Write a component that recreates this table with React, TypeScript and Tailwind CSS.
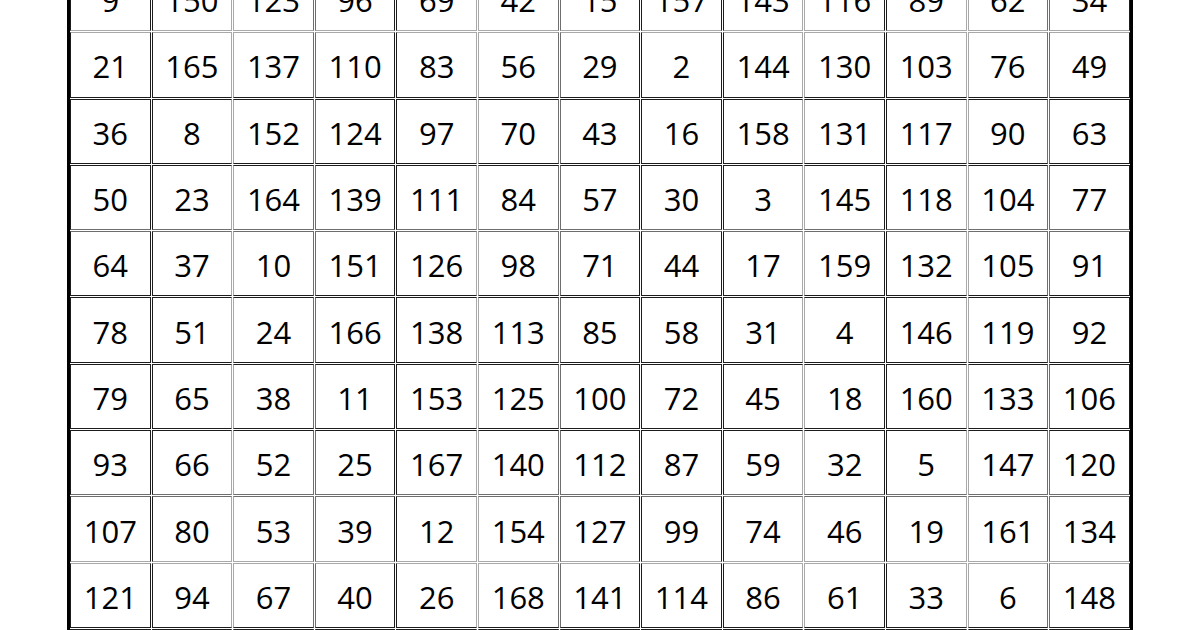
const rows: (number | null)[][] = [
  [9, 150, 123, 96, 69, 42, 15, 157, 143, 116, 89, 62, 34],
  [21, 165, 137, 110, 83, 56, 29, 2, 144, 130, 103, 76, 49],
  [36, 8, 152, 124, 97, 70, 43, 16, 158, 131, 117, 90, 63],
  [50, 23, 164, 139, 111, 84, 57, 30, 3, 145, 118, 104, 77],
  [64, 37, 10, 151, 126, 98, 71, 44, 17, 159, 132, 105, 91],
  [78, 51, 24, 166, 138, 113, 85, 58, 31, 4, 146, 119, 92],
  [79, 65, 38, 11, 153, 125, 100, 72, 45, 18, 160, 133, 106],
  [93, 66, 52, 25, 167, 140, 112, 87, 59, 32, 5, 147, 120],
  [107, 80, 53, 39, 12, 154, 127, 99, 74, 46, 19, 161, 134],
  [121, 94, 67, 40, 26, 168, 141, 114, 86, 61, 33, 6, 148],
  [null, null, null, null, null, null, null, null, null, null, null, null, null],
];

type Tone = "dark" | "mid" | "light";

// line tone between column k-1 and k
const colLines: Tone[] = ["dark", "dark", "light", "mid", "dark", "light", "mid", "dark", "dark", "light", "dark", "light", "mid", "dark"];
// line tone between row k-1 and k
const rowLines: Tone[] = ["dark", "light", "dark", "dark", "mid", "dark", "dark", "dark", "mid", "light", "dark", "dark"];

const leftCls: Record<Tone, string> = {
  dark: "border-l-[#1c1c1c]",
  mid: "border-l-[#6e6e6e]",
  light: "border-l-[#a9a9a9]",
};
const rightCls: Record<Tone, string> = {
  dark: "border-r-[#1c1c1c]",
  mid: "border-r-[#6e6e6e]",
  light: "border-r-[#a9a9a9]",
};
const topCls: Record<Tone, string> = {
  dark: "border-t-[#1c1c1c]",
  mid: "border-t-[#6e6e6e]",
  light: "border-t-[#a9a9a9]",
};
const bottomCls: Record<Tone, string> = {
  dark: "border-b-[#1c1c1c]",
  mid: "border-b-[#6e6e6e]",
  light: "border-b-[#a9a9a9]",
};

export default function App() {
  return (
    <div className="w-[1200px] h-[630px] overflow-hidden bg-white">
      <div
        className="ml-[67px] mt-[-34px] w-fit border-x-[3px] border-black"
        style={{ fontFamily: '"Open Sans", "Noto Sans", sans-serif' }}
      >
        <div className="grid grid-cols-[repeat(13,80.6px)] gap-[1px]">
          {rows.map((row, r) =>
            row.map((n, c) => (
              <div
                key={`${r}-${c}`}
                className={`h-[65.3px] pt-[4px] border flex items-center justify-center text-[31px] text-black leading-none ${leftCls[colLines[c]]} ${rightCls[colLines[c + 1]]} ${topCls[rowLines[r]]} ${bottomCls[rowLines[r + 1]]}`}
              >
                {n ?? ""}
              </div>
            ))
          )}
        </div>
      </div>
    </div>
  );
}
